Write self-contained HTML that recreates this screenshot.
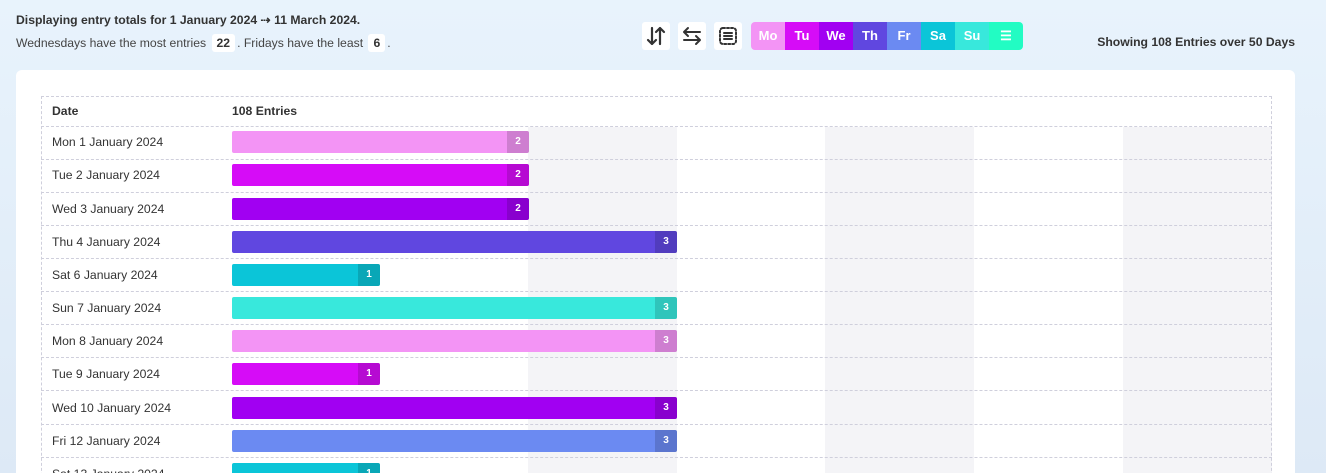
<!DOCTYPE html>
<html><head><meta charset="utf-8"><style>
*{margin:0;padding:0;box-sizing:border-box}
html{width:1326px;height:473px;overflow:hidden}
body{width:1326px;height:473px;overflow:hidden;background:linear-gradient(180deg,#e8f3fc,#dde9f6);font-family:"Liberation Sans",sans-serif;color:#333;position:relative}
.t1{position:absolute;left:16px;top:13px;font-size:12.2px;font-weight:bold;color:#333}
.t2{position:absolute;left:16px;top:34px;font-size:12.2px;color:#444}
.pill{display:inline-block;background:#fff;border-radius:3px;padding:2px 5px;font-weight:bold;margin:0 2px;color:#333}
.right{position:absolute;right:31px;top:35px;font-size:12.2px;font-weight:bold;color:#333}
.ib{position:absolute;top:22px;width:28px;height:28px;background:#fff;border-radius:3px}
.days{position:absolute;left:751px;top:22px;height:28px;display:flex;border-radius:4px;overflow:hidden}
.days div{width:34px;height:28px;color:#fff;font-weight:bold;font-size:13px;text-align:center;line-height:28px}
.card{position:absolute;left:16px;top:70px;width:1279px;height:420px;background:#fff;border-radius:6px}
.tbl{position:absolute;left:41px;top:96px;width:1231px;height:400px;border:1px dashed #cfcfdc}
.band{position:absolute;top:127px;height:360px;width:148.5px;background:#f4f4f7}
.hl{position:absolute;left:41px;width:1231px;border-top:1px dashed #cfcfdc}
.lbl{position:absolute;left:52px;font-size:12.2px;color:#333}
.bar{position:absolute;left:232px;height:22px;border-radius:2px}
.bar span{position:absolute;right:0;top:0;width:22px;height:22px;background:rgba(0,0,0,.15);color:#fff;font-size:10px;font-weight:bold;text-align:center;line-height:22px;border-radius:0 2px 2px 0}
</style></head><body>
<div class="t1">Displaying entry totals for 1 January 2024 ⇢ 11 March 2024.</div>
<div class="t2">Wednesdays have the most entries <span class="pill">22</span>. Fridays have the least <span class="pill">6</span>.</div>
<div class="ib" style="left:642px"><svg width="28" height="28" viewBox="0 0 28 28" fill="none" stroke="#333" stroke-width="2.2" stroke-linecap="round" stroke-linejoin="round"><path d="M10 6v16M6 18l4 4 4-4M18 22V6M14 10l4-4 4 4"/></svg></div>
<div class="ib" style="left:678px"><svg width="28" height="28" viewBox="0 0 28 28" fill="none" stroke="#333" stroke-width="2" stroke-linecap="round" stroke-linejoin="round"><path d="M6 10h16M10 6l-4 4 4 4M22 18H6M18 14l4 4-4 4"/></svg></div>
<div class="ib" style="left:714px"><svg width="28" height="28" viewBox="0 0 28 28" fill="none" stroke="#333" stroke-width="2" stroke-linecap="round"><rect x="6" y="6" width="16" height="16" rx="3" stroke-dasharray="2 2"/><path d="M10 11h8M10 14h8M10 17h8"/></svg></div>
<div class="days"><div style="background:#f394f5">Mo</div><div style="background:#d60cf7">Tu</div><div style="background:#a100f2">We</div><div style="background:#6047e0">Th</div><div style="background:#6b8af2">Fr</div><div style="background:#0bc5d8">Sa</div><div style="background:#38e8dc">Su</div><div style="background:#22fcc3">☰</div></div>
<div class="right">Showing 108 Entries over 50 Days</div>
<div class="card"></div>
<div class="band" style="left:528px"></div>
<div class="band" style="left:825px"></div>
<div class="band" style="left:1123px"></div>
<div class="tbl"></div>
<div class="lbl" style="top:104px;font-weight:bold">Date</div>
<div class="lbl" style="left:232px;top:104px;font-weight:bold">108 Entries</div>
<div class="hl" style="top:126px"></div>
<div class="lbl" style="top:135px">Mon 1 January 2024</div><div class="bar" style="top:131px;width:297px;background:#f394f5"><span>2</span></div>
<div class="hl" style="top:159px"></div>
<div class="lbl" style="top:168px">Tue 2 January 2024</div><div class="bar" style="top:164px;width:297px;background:#d60cf7"><span>2</span></div>
<div class="hl" style="top:192px"></div>
<div class="lbl" style="top:202px">Wed 3 January 2024</div><div class="bar" style="top:198px;width:297px;background:#a100f2"><span>2</span></div>
<div class="hl" style="top:225px"></div>
<div class="lbl" style="top:235px">Thu 4 January 2024</div><div class="bar" style="top:231px;width:445px;background:#6047e0"><span>3</span></div>
<div class="hl" style="top:258px"></div>
<div class="lbl" style="top:268px">Sat 6 January 2024</div><div class="bar" style="top:264px;width:148px;background:#0bc5d8"><span>1</span></div>
<div class="hl" style="top:291px"></div>
<div class="lbl" style="top:301px">Sun 7 January 2024</div><div class="bar" style="top:297px;width:445px;background:#38e8dc"><span>3</span></div>
<div class="hl" style="top:324px"></div>
<div class="lbl" style="top:334px">Mon 8 January 2024</div><div class="bar" style="top:330px;width:445px;background:#f394f5"><span>3</span></div>
<div class="hl" style="top:357px"></div>
<div class="lbl" style="top:367px">Tue 9 January 2024</div><div class="bar" style="top:363px;width:148px;background:#d60cf7"><span>1</span></div>
<div class="hl" style="top:390px"></div>
<div class="lbl" style="top:401px">Wed 10 January 2024</div><div class="bar" style="top:397px;width:445px;background:#a100f2"><span>3</span></div>
<div class="hl" style="top:424px"></div>
<div class="lbl" style="top:434px">Fri 12 January 2024</div><div class="bar" style="top:430px;width:445px;background:#6b8af2"><span>3</span></div>
<div class="hl" style="top:457px"></div>
<div class="lbl" style="top:467px">Sat 13 January 2024</div><div class="bar" style="top:463px;width:148px;background:#0bc5d8"><span>1</span></div>
</body></html>
